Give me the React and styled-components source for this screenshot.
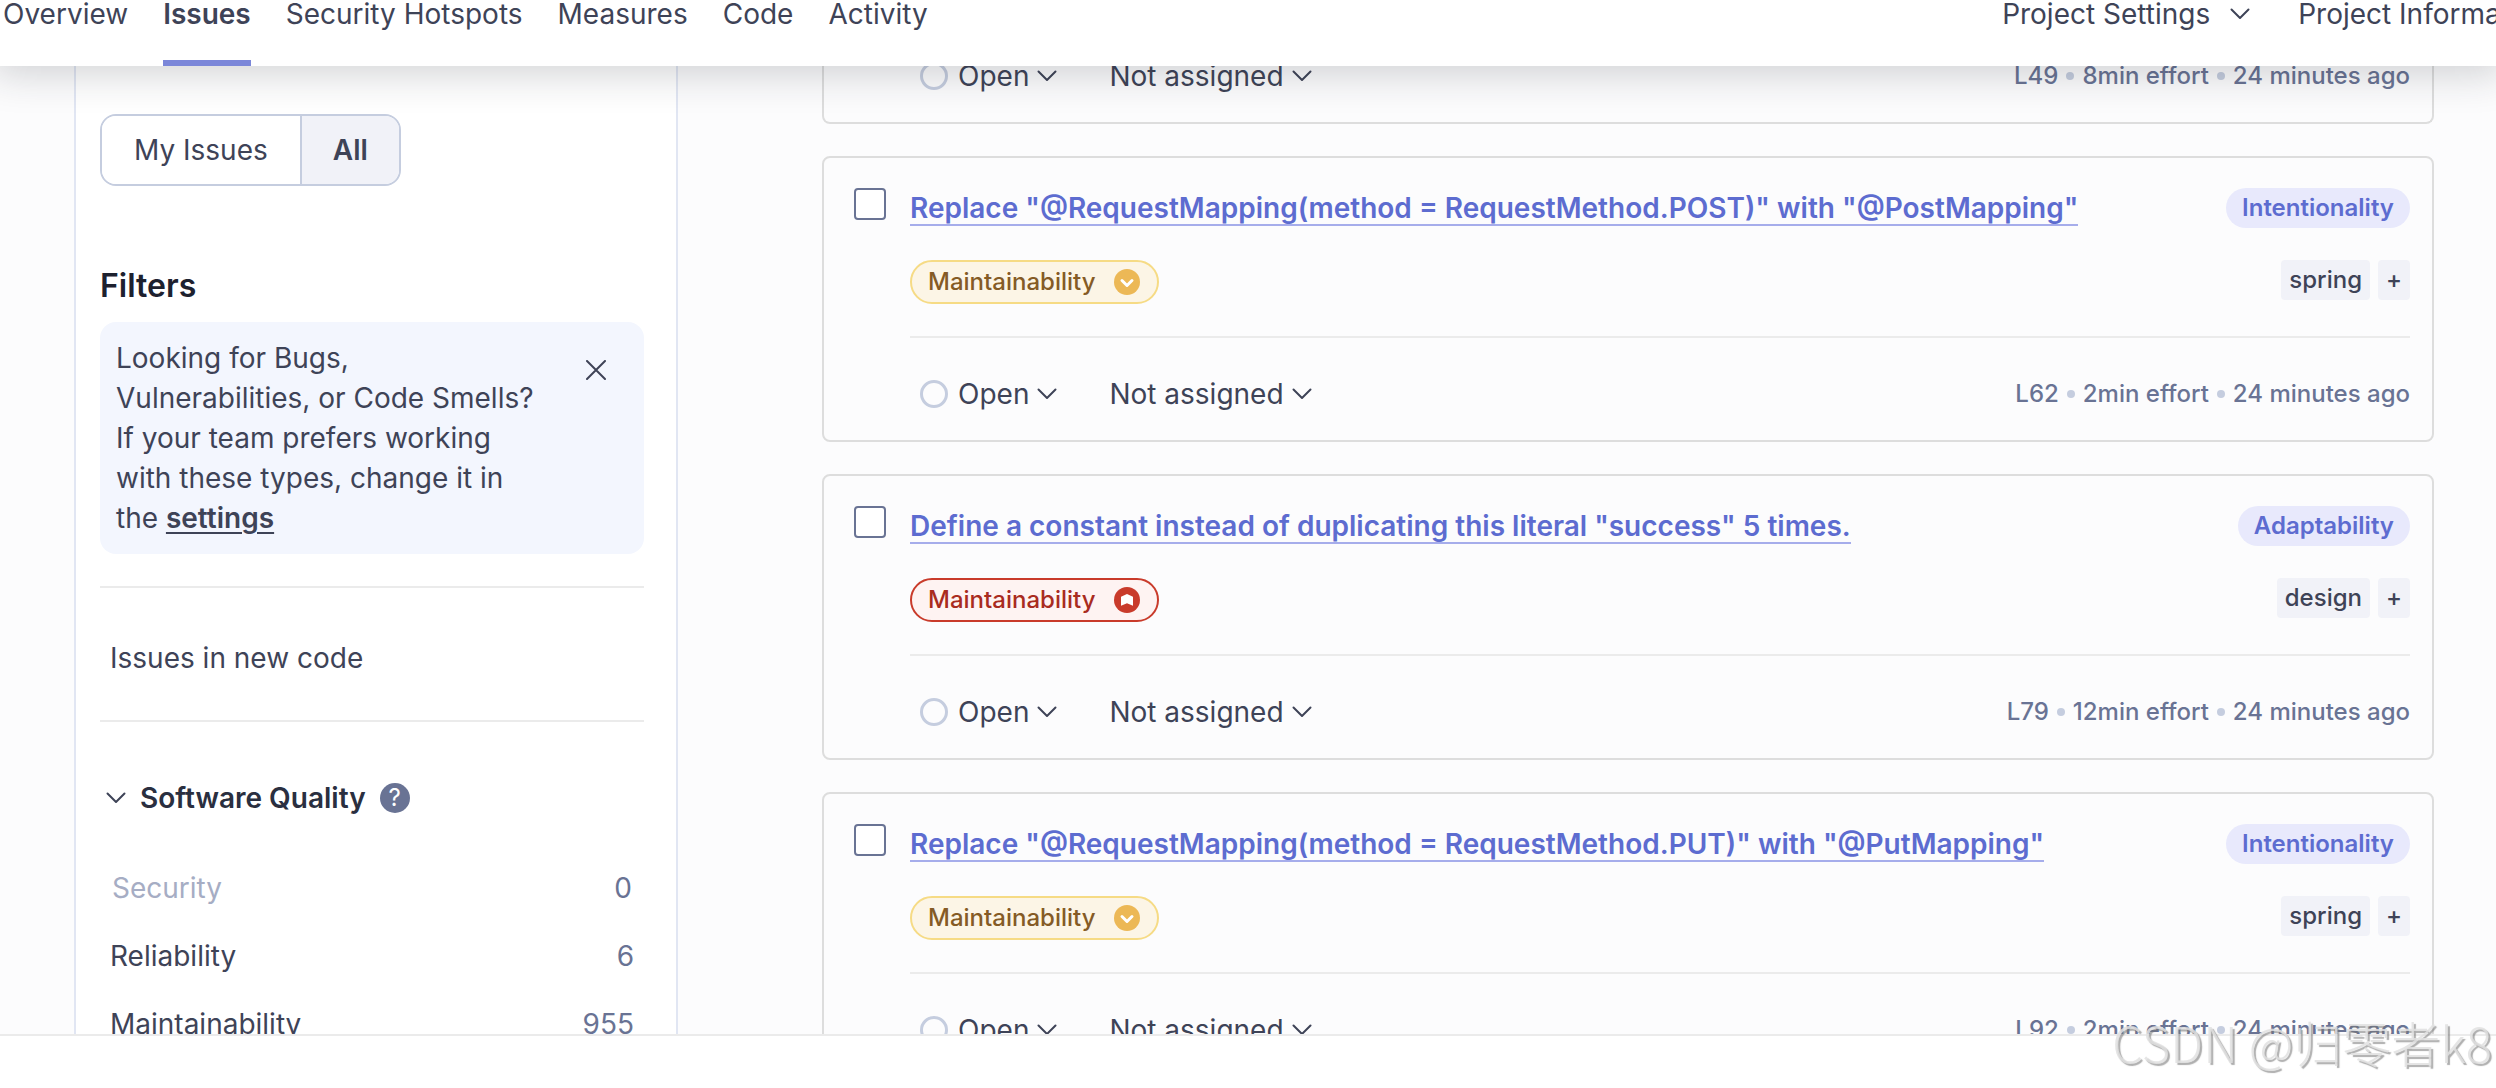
import styled, { createGlobalStyle } from "styled-components";

const filters = [
  { name: "Security", count: 0, disabled: true },
  { name: "Reliability", count: 6 },
  { name: "Maintainability", count: 955 },
];

const issues = [
  {
    id: 1,
    title: 'Replace "@RequestMapping(method = RequestMethod.POST)" with "@PostMapping"',
    attribute: "Intentionality",
    severity: "low",
    tag: "spring",
    line: "L62",
    effort: "2min effort",
  },
  {
    id: 2,
    title: 'Define a constant instead of duplicating this literal "success" 5 times.',
    attribute: "Adaptability",
    severity: "high",
    tag: "design",
    line: "L79",
    effort: "12min effort",
  },
  {
    id: 3,
    title: 'Replace "@RequestMapping(method = RequestMethod.PUT)" with "@PutMapping"',
    attribute: "Intentionality",
    severity: "low",
    tag: "spring",
    line: "L92",
    effort: "2min effort",
  },
];

const Chevron = () => (
  <svg width="20" height="12" viewBox="0 0 20 12" fill="none" aria-hidden="true">
    <path
      d="M1.5 1.5L10 10L18.5 1.5"
      stroke="#3e4357"
      strokeWidth="2"
      strokeLinecap="round"
      strokeLinejoin="round"
    />
  </svg>
);

const CloseIcon = () => (
  <svg width="20" height="20" viewBox="0 0 20 20" fill="none" aria-hidden="true">
    <path d="M1 1L19 19M19 1L1 19" stroke="#3e4357" strokeWidth="2" strokeLinecap="round" />
  </svg>
);

const SeverityIcon = ({ severity }) => (
  <svg width="32" height="32" viewBox="0 0 32 32" fill="none" aria-hidden="true">
    <circle cx="16" cy="16" r="13" fill={severity === "high" ? "#c93b2b" : "#ecb856"} />
    {severity === "high" ? (
      <path d="M10 12.7L16 10L22 12.7V21.7L16 19.3L10 21.7Z" fill="#fff" />
    ) : (
      <path
        d="M11 14.5L16 19.5L21 14.5"
        stroke="#fff"
        strokeWidth="3"
        strokeLinecap="round"
        strokeLinejoin="round"
      />
    )}
  </svg>
);

const IssueFooter = ({ line, effort }) => (
  <FooterRow>
    <Dropdown $inset>
      <StatusCircle />
      Open
      <Chevron />
    </Dropdown>
    <Dropdown>
      Not assigned
      <Chevron />
    </Dropdown>
    <Meta>
      <span>{line}</span>
      <Dot />
      <span>{effort}</span>
      <Dot />
      <span>24 minutes ago</span>
    </Meta>
  </FooterRow>
);

const IssueCard = ({ issue }) => (
  <Card>
    <Checkbox type="checkbox" aria-label={issue.title} />
    <CardBody>
      <CardRow>
        <IssueLink href="#issue">{issue.title}</IssueLink>
        <Attribute>{issue.attribute}</Attribute>
      </CardRow>
      <CardRow>
        <QualityPill $severity={issue.severity}>
          Maintainability
          <SeverityIcon severity={issue.severity} />
        </QualityPill>
        <Tags>
          <Tag>{issue.tag}</Tag>
          <AddTag>+</AddTag>
        </Tags>
      </CardRow>
      <Divider />
      <IssueFooter line={issue.line} effort={issue.effort} />
    </CardBody>
  </Card>
);

const App = () => {
  return (
    <Page>
      <GlobalStyle />
      <Header>
        <Nav>
          <NavLink href="#overview">Overview</NavLink>
          <NavLink href="#issues" $active>
            Issues
          </NavLink>
          <NavLink href="#hotspots">Security Hotspots</NavLink>
          <NavLink href="#measures">Measures</NavLink>
          <NavLink href="#code">Code</NavLink>
          <NavLink href="#activity">Activity</NavLink>
        </Nav>
        <ProjectNav>
          <NavButton>
            Project Settings
            <Chevron />
          </NavButton>
          <NavLink href="#information">Project Information</NavLink>
        </ProjectNav>
      </Header>
      <Main>
        <Sidebar>
          <Toggle>
            <ToggleOption>My Issues</ToggleOption>
            <ToggleOption $active>All</ToggleOption>
          </Toggle>
          <FiltersTitle>Filters</FiltersTitle>
          <Notice>
            <NoticeText>
              Looking for Bugs, Vulnerabilities, or Code Smells? If your team
              prefers working with these types, change it in the{" "}
              <a href="#settings">settings</a>
            </NoticeText>
            <CloseButton aria-label="Close">
              <CloseIcon />
            </CloseButton>
          </Notice>
          <Divider />
          <NewCode>Issues in new code</NewCode>
          <Divider />
          <FacetHeader>
            <FacetToggle>
              <Chevron />
              Software Quality
            </FacetToggle>
            <Help>?</Help>
          </FacetHeader>
          <FacetList>
            {filters.map((item) => (
              <FacetItem key={item.name} disabled={item.disabled}>
                {item.name}
                <Count>{item.count}</Count>
              </FacetItem>
            ))}
          </FacetList>
        </Sidebar>
        <IssueList>
          <ScrolledCard>
            <CardBody>
              <IssueFooter line="L49" effort="8min effort" />
            </CardBody>
          </ScrolledCard>
          {issues.map((issue) => (
            <IssueCard key={issue.id} issue={issue} />
          ))}
        </IssueList>
      </Main>
      <BottomBar />
      <Watermark>CSDN @归零者k8</Watermark>
    </Page>
  );
};

const GlobalStyle = createGlobalStyle`
  * {
    box-sizing: border-box;
  }

  body {
    margin: 0;
    background: #fff;
    color: #3e4357;
    font-family: Inter, "Noto Sans CJK SC", sans-serif;
    font-size: 28px;
    line-height: 40px;
  }

  button {
    margin: 0;
    padding: 0;
    border: none;
    background: none;
    color: inherit;
    font: inherit;
    cursor: pointer;
  }

  svg {
    flex: none;
  }
`;

const Page = styled.div`
  position: relative;
  display: flex;
  flex-direction: column;
  height: 100vh;
  overflow: hidden;
`;

const Header = styled.header`
  position: relative;
  z-index: 1;
  flex: none;
  display: flex;
  justify-content: space-between;
  padding-left: 3px;
  background: #fff;
  box-shadow: 0 0 40px 8px rgba(29, 33, 47, 0.2);
`;

const Nav = styled.nav`
  display: flex;
  gap: 35px;
`;

/* the last entry runs past the right edge of the window */
const ProjectNav = styled(Nav)`
  gap: 48px;
  margin-right: -54px;
`;

const NavLink = styled.a`
  padding-bottom: 32px;
  border-bottom: 6px solid ${(props) => (props.$active ? "#7b87d9" : "transparent")};
  color: #3e4357;
  font-weight: ${(props) => (props.$active ? 600 : 400)};
  line-height: 28px;
  text-decoration: none;
  white-space: nowrap;
`;

const NavButton = styled.button`
  display: flex;
  align-items: center;
  gap: 20px;
  height: 28px;
  white-space: nowrap;
`;

const Main = styled.main`
  flex: 1;
  min-height: 0;
  display: flex;
  gap: 144px;
  padding: 0 62px 0 74px;
  background: #fcfcfd;
  overflow: hidden;
`;

const Sidebar = styled.aside`
  flex: none;
  width: 604px;
  padding: 48px 32px 0 24px;
  border: solid #e1e6f3;
  border-width: 0 2px;
  background: #fff;
`;

const Toggle = styled.div`
  display: flex;
  width: fit-content;
  height: 72px;
  border: 2px solid #c5cddf;
  border-radius: 16px;
  overflow: hidden;
`;

const ToggleOption = styled.button`
  padding: 0 32px;
  background: ${(props) => (props.$active ? "#f1f2f8" : "#fff")};
  font-weight: ${(props) => (props.$active ? 600 : 400)};

  & + & {
    padding: 0 31px;
    border-left: 2px solid #c5cddf;
  }
`;

const FiltersTitle = styled.h2`
  margin: 76px 0 12px;
  color: #1d212f;
  font-size: 32px;
  font-weight: 600;
  line-height: 48px;
`;

const Notice = styled.div`
  display: flex;
  align-items: flex-start;
  justify-content: space-between;
  gap: 24px;
  margin-bottom: 32px;
  padding: 16px;
  border-radius: 16px;
  background: #f3f6fe;
`;

const NoticeText = styled.p`
  margin: 0;

  a {
    color: inherit;
    font-weight: 600;
    text-decoration-thickness: 2px;
    text-underline-offset: 4px;
  }
`;

const CloseButton = styled.button`
  flex: none;
  display: flex;
  align-items: center;
  justify-content: center;
  width: 64px;
  height: 64px;
`;

const Divider = styled.hr`
  margin: 0;
  border: none;
  border-top: 2px solid #ebebeb;
`;

const NewCode = styled.button`
  display: block;
  margin: 50px 0 42px;
  padding: 0 10px;
`;

const FacetHeader = styled.div`
  display: flex;
  align-items: center;
  gap: 14px;
  margin: 56px 0 38px;
  padding-left: 6px;
`;

const FacetToggle = styled.button`
  display: flex;
  align-items: center;
  gap: 14px;
  color: #2a2f40;
  font-weight: 600;
`;

const Help = styled.span`
  display: flex;
  align-items: center;
  justify-content: center;
  width: 30px;
  height: 30px;
  border-radius: 50%;
  background: #697394;
  color: #fff;
  font-size: 24px;
`;

const FacetList = styled.div`
  display: flex;
  flex-direction: column;
  gap: 4px;
`;

const FacetItem = styled.button`
  display: flex;
  align-items: center;
  justify-content: space-between;
  height: 64px;
  padding: 0 ${(props) => (props.disabled ? 12 : 10)}px;
  color: ${(props) => (props.disabled ? "#a6adc4" : "#3e4357")};
`;

const Count = styled.span`
  color: #697394;
`;

const IssueList = styled.section`
  flex: 1;
  min-width: 0;
  display: flex;
  flex-direction: column;
  gap: 32px;
  margin-top: -6px;
`;

const Card = styled.article`
  flex: none;
  display: flex;
  align-items: flex-start;
  gap: 24px;
  padding: 30px 22px 30px 30px;
  border: 2px solid #dddddd;
  border-radius: 8px;
`;

/* only the foot of this card is still in view under the header */
const ScrolledCard = styled(Card)`
  padding-top: 0;
  padding-left: 86px;
  border-top: none;
  border-radius: 0 0 8px 8px;
`;

const Checkbox = styled.input`
  appearance: none;
  flex: none;
  width: 32px;
  height: 32px;
  margin: 0;
  border: 2px solid #697394;
  border-radius: 4px;
  background: #fff;
`;

const CardBody = styled.div`
  flex: 1;
  min-width: 0;
`;

const CardRow = styled.div`
  display: flex;
  align-items: flex-start;
  justify-content: space-between;
  margin-bottom: 32px;
`;

const IssueLink = styled.a`
  margin-top: 4px;
  border-bottom: 2px solid #a6adeb;
  color: #5d6cd0;
  font-weight: 600;
  line-height: 32px;
  text-decoration: none;
`;

const Attribute = styled.span`
  padding: 0 16px;
  border-radius: 20px;
  background: #e8e9fc;
  color: #5d6cd0;
  font-size: 24px;
  font-weight: 600;
`;

const QualityPill = styled.button`
  display: flex;
  align-items: center;
  gap: 16px;
  padding: 0 14px 0 16px;
  border: 2px solid ${(props) => (props.$severity === "high" ? "#c93b2b" : "#f6db85")};
  border-radius: 22px;
  background: ${(props) => (props.$severity === "high" ? "#fef3f2" : "#fcf5e6")};
  color: ${(props) => (props.$severity === "high" ? "#a92b20" : "#855b25")};
  font-size: 24px;
  font-weight: 500;
`;

const Tags = styled.div`
  display: flex;
  gap: 8px;
  font-size: 24px;
  font-weight: 500;
`;

const Tag = styled.span`
  padding: 0 8px;
  border-radius: 4px;
  background: #f1f2f8;
`;

const AddTag = styled.button`
  width: 32px;
  border-radius: 4px;
  background: #f1f2f8;
`;

const FooterRow = styled.div`
  display: flex;
  align-items: center;
  gap: 52px;
  height: 32px;

  hr + & {
    margin-top: 40px;
  }
`;

const Dropdown = styled.button`
  display: flex;
  align-items: center;
  gap: 8px;
  padding-left: ${(props) => (props.$inset ? 10 : 0)}px;
  white-space: nowrap;
`;

const StatusCircle = styled.span`
  width: 28px;
  height: 28px;
  margin-right: 2px;
  border: 3px solid #c5cddf;
  border-radius: 50%;
`;

const Meta = styled.div`
  display: flex;
  align-items: center;
  gap: 8px;
  margin-left: auto;
  color: #697394;
  font-size: 24px;
  font-weight: 500;
  white-space: nowrap;
`;

const Dot = styled.span`
  width: 8px;
  height: 8px;
  border-radius: 50%;
  background: #c5cddf;
`;

const BottomBar = styled.footer`
  flex: none;
  height: 54px;
  border-top: 2px solid #ebebeb;
  background: #fff;
`;

const Watermark = styled.div`
  position: absolute;
  right: 4px;
  bottom: 16px;
  z-index: 2;
  color: rgba(225, 225, 225, 0.85);
  font-family: "Noto Sans CJK SC", sans-serif;
  font-size: 49px;
  font-weight: 300;
  line-height: 60px;
  text-shadow: 2px 2px 1px rgba(120, 120, 120, 0.6);
  pointer-events: none;
`;

export default App;
